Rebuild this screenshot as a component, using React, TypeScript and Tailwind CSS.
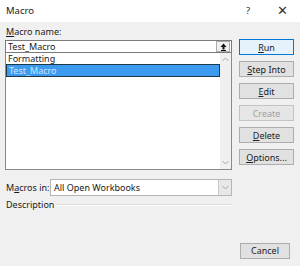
import React from "react";

const font = { fontFamily: '"Noto Sans", "Open Sans", sans-serif' };

function Chevron({ up }: { up?: boolean }) {
    return (
        <svg width="7" height="5" viewBox="0 0 7 5" className={up ? "rotate-180" : ""}>
            <path d="M0.5 1 L3.5 4 L6.5 1" fill="none" stroke="#a6a6a6" strokeWidth="1" />
        </svg>
    );
}

function DlgButton({ ul, rest, primary, disabled }: { ul: string; rest: string; primary?: boolean; disabled?: boolean }) {
    return (
        <button
            className={
                "h-[16px] w-[55px] flex items-center justify-center text-[9px] leading-none border " +
                (primary
                    ? "bg-[#e5f1fb] border-[#0078d7] text-[#222]"
                    : disabled
                      ? "bg-[#e6e6e6] border-[#c4c4c4] text-[#a0a0a0]"
                      : "bg-[#e1e1e1] border-[#adadad] text-[#222]")
            }
        >
            <span className="underline">{ul}</span>
            {rest}
        </button>
    );
}

export default function App() {
    return (
        <div className="w-[300px] h-[266px] bg-[#f0f0f0] text-[#1a1a1a] overflow-hidden" style={font}>
            {/* Title bar */}
            <div className="h-[22px] bg-white flex items-center text-[9.5px]">
                <span className="pl-[6px] flex-1">Macro</span>
                <span className="w-[14px] text-center mr-[20px] text-[#333]">?</span>
                <span className="w-[14px] text-center mr-[11px] text-[13px] font-light text-[#333]">✕</span>
            </div>

            <div className="flex pl-[5px] pt-[4px]">
                {/* Left column */}
                <div className="w-[227px] flex flex-col">
                    <div className="h-[14px] text-[9px] pl-[1px] leading-[12px]">
                        <span className="underline">M</span>acro name:
                    </div>
                    <div className="h-[13px] bg-white border border-[#7a7a7a] flex items-center">
                        <span className="flex-1 pl-[2px] text-[9px] leading-[10px]">Test_Macro</span>
                        <div className="w-[14px] h-[11px] mr-[1px] bg-[#f0f0f0] border border-[#adadad] flex items-center justify-center">
                            <svg width="7" height="8" viewBox="0 0 7 8">
                                <path d="M3.5 0.5 L0.5 4 H2.5 V6.5 H4.5 V4 H6.5 Z" fill="#111" />
                                <rect x="1" y="7" width="5" height="1" fill="#111" />
                            </svg>
                        </div>
                    </div>
                    <div className="h-[117px] bg-white border border-[#8a8a8a] border-t-0 flex overflow-hidden">
                        <div className="flex-1 flex flex-col text-[9px]">
                            <div className="h-[11px] leading-[11px] pl-[2px] text-[#222]">Formatting</div>
                            <div className="h-[13px] leading-[11px] pl-[2px] bg-[#3d9bef] border border-[#1c3a4a] text-[#cfe6ff]">
                                Test_Macro
                            </div>
                        </div>
                        <div className="w-[11px] bg-[#f0f0f0] flex flex-col items-center justify-between py-[4px]">
                            <Chevron up />
                            <Chevron />
                        </div>
                    </div>

                    <div className="flex items-center mt-[9px] h-[17px]">
                        <span className="w-[45px] text-[9px] pl-[1px]">
                            M<span className="underline">a</span>cros in:
                        </span>
                        <div className="flex-1 h-[17px] bg-white border border-[#b5b5b5] flex items-center">
                            <span className="flex-1 pl-[3px] text-[9px]">All Open Workbooks</span>
                            <div className="w-[13px] h-[15px] bg-[#e8e8e8] border-l border-[#c8c8c8] flex items-center justify-center">
                                <Chevron />
                            </div>
                        </div>
                    </div>

                    <div className="flex items-center mt-[2px] h-[14px]">
                        <span className="text-[9px] pl-[1px] whitespace-nowrap">Description</span>
                        <div className="flex-1 ml-[3px] h-[2px] border-t border-[#dadada] border-b border-b-white" />
                    </div>
                </div>

                {/* Right column */}
                <div className="ml-[7px] flex flex-col">
                    <div className="h-[13px]" />
                    <div className="flex flex-col gap-[6px]">
                        <DlgButton ul="R" rest="un" primary />
                        <DlgButton ul="S" rest="tep Into" />
                        <DlgButton ul="E" rest="dit" />
                        <DlgButton ul="" rest="Create" disabled />
                        <DlgButton ul="D" rest="elete" />
                        <DlgButton ul="O" rest="ptions..." />
                    </div>
                    <div className="h-[78px]" />
                    <div className="ml-[1px]">
                        <button className="h-[16px] w-[50px] flex items-center justify-center text-[9px] bg-[#e1e1e1] border border-[#adadad] text-[#222]">
                            Cancel
                        </button>
                    </div>
                </div>
            </div>
        </div>
    );
}
